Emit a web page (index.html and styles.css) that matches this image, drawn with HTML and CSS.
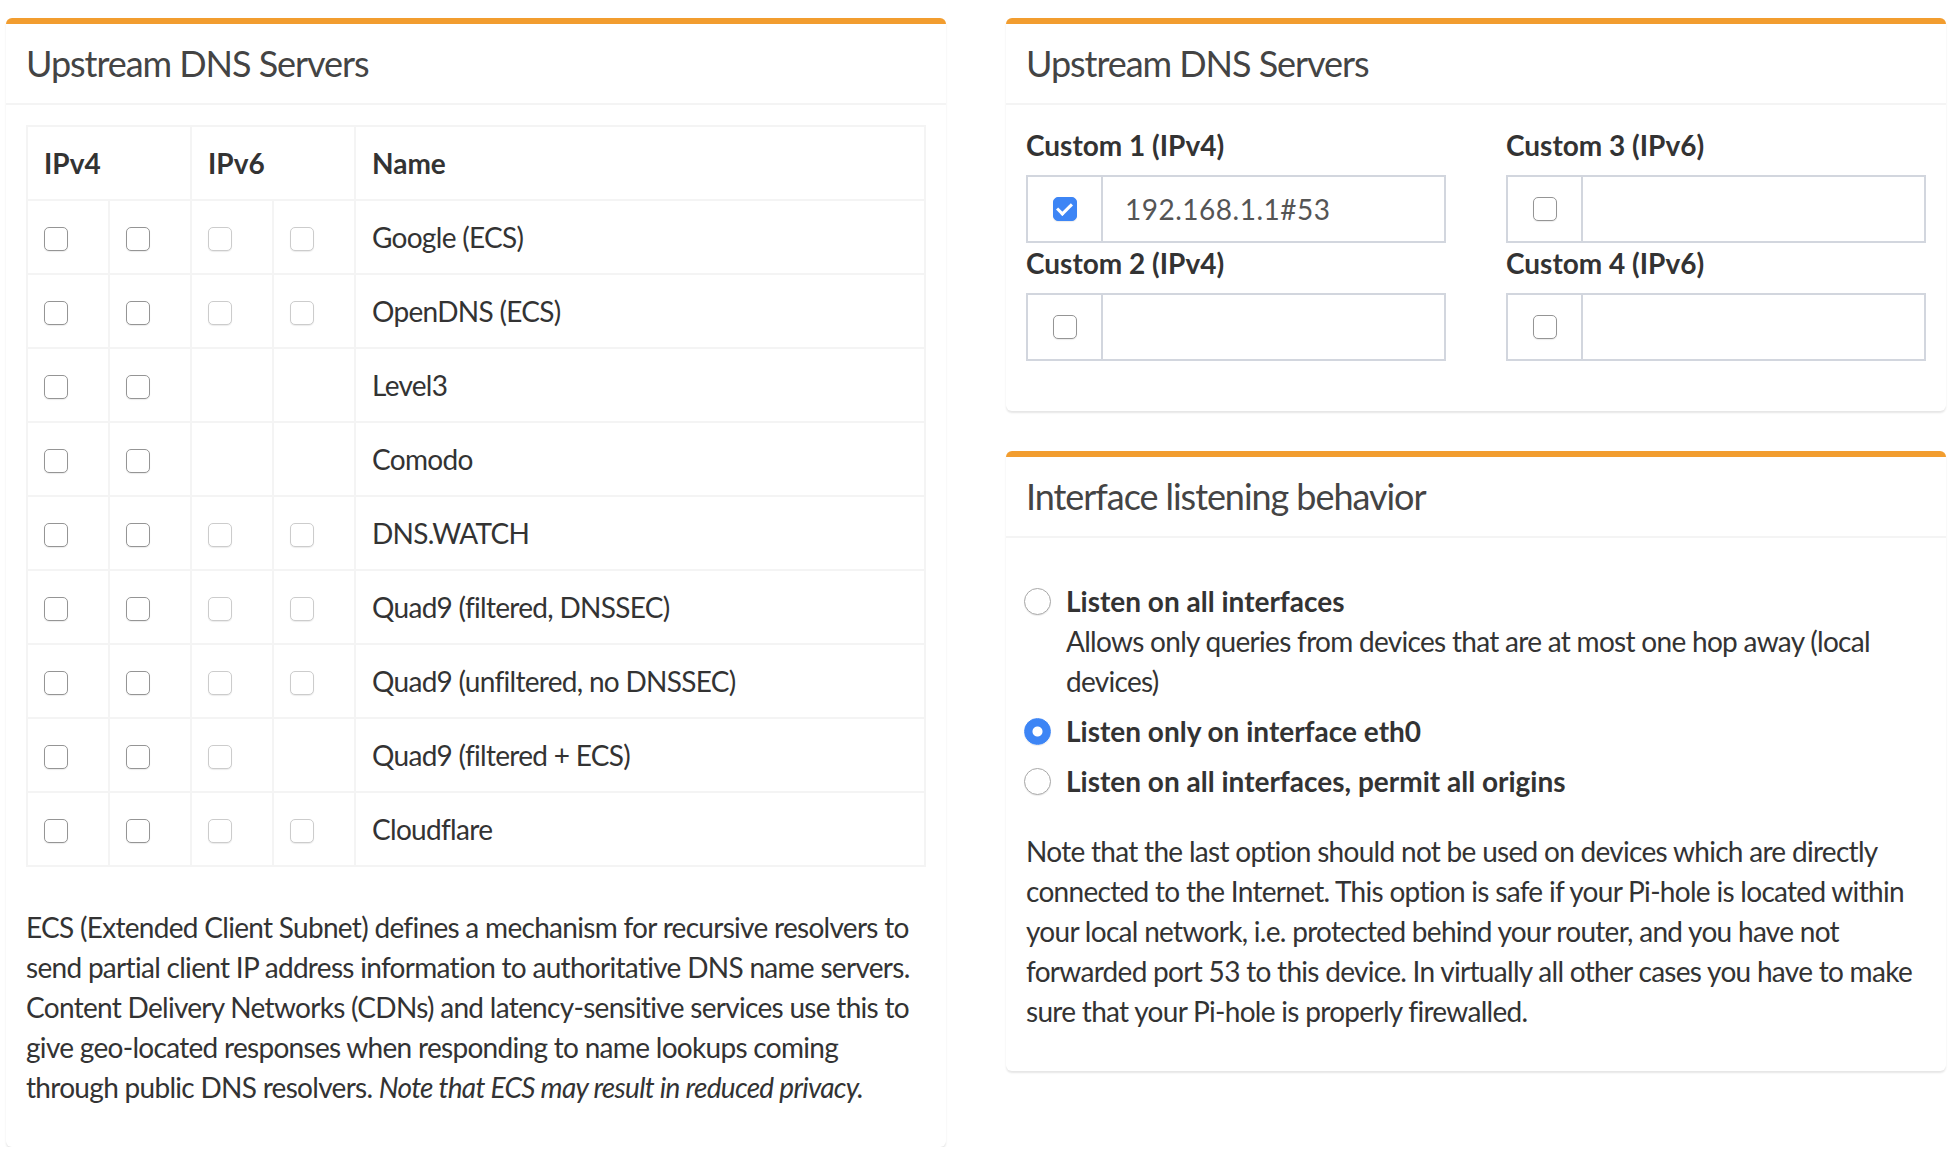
FILE: index.html
```html
<!DOCTYPE html>
<html lang="en">
<head>
    <meta charset="UTF-8">
    <meta name="viewport" content="width=device-width, initial-scale=1.0">
    <title>DNS Settings</title>
    <link rel="stylesheet" href="styles.css">
</head>
<body>
    <div class="page">
        <div class="column">
            <div class="box">
                <div class="box-header"><h3 class="box-title">Upstream DNS Servers</h3></div>
                <div class="box-body">
                    <table class="dns-table">
                        <colgroup>
                            <col class="cb-col"><col class="cb-col"><col class="cb-col"><col class="cb-col"><col>
                        </colgroup>
                        <thead>
                            <tr>
                                <th colspan="2">IPv4</th>
                                <th colspan="2">IPv6</th>
                                <th>Name</th>
                            </tr>
                        </thead>
                        <tbody>
                            <tr>
                                <td><input type="checkbox" class="cb"></td>
                                <td><input type="checkbox" class="cb"></td>
                                <td><input type="checkbox" class="cb light"></td>
                                <td><input type="checkbox" class="cb light"></td>
                                <td>Google (ECS)</td>
                            </tr>
                            <tr>
                                <td><input type="checkbox" class="cb"></td>
                                <td><input type="checkbox" class="cb"></td>
                                <td><input type="checkbox" class="cb light"></td>
                                <td><input type="checkbox" class="cb light"></td>
                                <td>OpenDNS (ECS)</td>
                            </tr>
                            <tr>
                                <td><input type="checkbox" class="cb"></td>
                                <td><input type="checkbox" class="cb"></td>
                                <td></td>
                                <td></td>
                                <td>Level3</td>
                            </tr>
                            <tr>
                                <td><input type="checkbox" class="cb"></td>
                                <td><input type="checkbox" class="cb"></td>
                                <td></td>
                                <td></td>
                                <td>Comodo</td>
                            </tr>
                            <tr>
                                <td><input type="checkbox" class="cb"></td>
                                <td><input type="checkbox" class="cb"></td>
                                <td><input type="checkbox" class="cb light"></td>
                                <td><input type="checkbox" class="cb light"></td>
                                <td>DNS.WATCH</td>
                            </tr>
                            <tr>
                                <td><input type="checkbox" class="cb"></td>
                                <td><input type="checkbox" class="cb"></td>
                                <td><input type="checkbox" class="cb light"></td>
                                <td><input type="checkbox" class="cb light"></td>
                                <td>Quad9 (filtered, DNSSEC)</td>
                            </tr>
                            <tr>
                                <td><input type="checkbox" class="cb"></td>
                                <td><input type="checkbox" class="cb"></td>
                                <td><input type="checkbox" class="cb light"></td>
                                <td><input type="checkbox" class="cb light"></td>
                                <td>Quad9 (unfiltered, no DNSSEC)</td>
                            </tr>
                            <tr>
                                <td><input type="checkbox" class="cb"></td>
                                <td><input type="checkbox" class="cb"></td>
                                <td><input type="checkbox" class="cb light"></td>
                                <td></td>
                                <td>Quad9 (filtered + ECS)</td>
                            </tr>
                            <tr>
                                <td><input type="checkbox" class="cb"></td>
                                <td><input type="checkbox" class="cb"></td>
                                <td><input type="checkbox" class="cb light"></td>
                                <td><input type="checkbox" class="cb light"></td>
                                <td>Cloudflare</td>
                            </tr>
                        </tbody>
                    </table>
                    <p class="hard-wrap">ECS (Extended Client Subnet) defines a mechanism for recursive resolvers to<br>
                    send partial client IP address information to authoritative DNS name servers.<br>
                    Content Delivery Networks (CDNs) and latency-sensitive services use this to<br>
                    give geo-located responses when responding to name lookups coming<br>
                    through public DNS resolvers. <em>Note that ECS may result in reduced privacy.</em></p>
                </div>
            </div>
        </div>

        <div class="column">
            <div class="box">
                <div class="box-header"><h3 class="box-title">Upstream DNS Servers</h3></div>
                <div class="box-body">
                    <div class="custom-grid">
                        <div class="custom-col">
                            <label for="custom1">Custom 1 (IPv4)</label>
                            <div class="input-group">
                                <span class="addon"><input type="checkbox" class="cb" checked></span>
                                <input type="text" id="custom1" class="field" value="192.168.1.1#53">
                            </div>
                            <label for="custom2">Custom 2 (IPv4)</label>
                            <div class="input-group">
                                <span class="addon"><input type="checkbox" class="cb"></span>
                                <input type="text" id="custom2" class="field">
                            </div>
                        </div>
                        <div class="custom-col">
                            <label for="custom3">Custom 3 (IPv6)</label>
                            <div class="input-group">
                                <span class="addon"><input type="checkbox" class="cb"></span>
                                <input type="text" id="custom3" class="field">
                            </div>
                            <label for="custom4">Custom 4 (IPv6)</label>
                            <div class="input-group">
                                <span class="addon"><input type="checkbox" class="cb"></span>
                                <input type="text" id="custom4" class="field">
                            </div>
                        </div>
                    </div>
                </div>
            </div>

            <div class="box">
                <div class="box-header"><h3 class="box-title">Interface listening behavior</h3></div>
                <div class="box-body">
                    <div class="radio-list">
                        <div class="radio">
                            <input type="radio" name="listening" id="local">
                            <label for="local"><strong>Listen on all interfaces</strong><br>Allows only queries from devices that are at most one hop away (local<br>devices)</label>
                        </div>
                        <div class="radio">
                            <input type="radio" name="listening" id="single" checked>
                            <label for="single"><strong>Listen only on interface eth0</strong></label>
                        </div>
                        <div class="radio">
                            <input type="radio" name="listening" id="all">
                            <label for="all"><strong>Listen on all interfaces, permit all origins</strong></label>
                        </div>
                    </div>
                    <p class="hard-wrap">Note that the last option should not be used on devices which are directly<br>
                    connected to the Internet. This option is safe if your Pi-hole is located within<br>
                    your local network, i.e. protected behind your router, and you have not<br>
                    forwarded port 53 to this device. In virtually all other cases you have to make<br>
                    sure that your Pi-hole is properly firewalled.</p>
                </div>
            </div>
        </div>
    </div>
</body>
</html>
```

FILE: styles.css
```css
body { margin: 0; background-color: #fff; font-family: Lato, "Liberation Sans", sans-serif; font-size: 28px; line-height: 40px; color: #333; letter-spacing: -0.7px; }
strong, th, label { letter-spacing: 0; }
.page { display: grid; grid-template-columns: 940px 940px; gap: 60px; padding: 18px 8px 0 6px; align-items: start; }
.column { display: flex; flex-direction: column; gap: 40px; }

.box { background-color: #fff; border-top: 6px solid #f29d2f; border-radius: 6px; box-shadow: 0 2px 2px rgba(0, 0, 0, 0.1); }
.box-header { padding: 20px; border-bottom: 2px solid #f4f4f4; }
.box-title { margin: 0; font-size: 36px; font-weight: normal; line-height: 39px; color: #444; letter-spacing: -1.05px; }
.box-body { padding: 20px; }
.box-body p { margin: 0 0 20px; }
.hard-wrap { white-space: nowrap; }
.radio label { letter-spacing: -0.7px; }

.dns-table { width: 100%; border-collapse: collapse; border: 2px solid #f4f4f4; margin-bottom: 40px; }
.dns-table th, .dns-table td { border: 2px solid #f4f4f4; padding: 16px; text-align: left; vertical-align: top; }
.dns-table th { font-weight: bold; }
.cb-col { width: 82px; }

.cb { appearance: none; -webkit-appearance: none; display: inline-grid; place-content: center; width: 24px; height: 24px; margin: 10px 0 0; border: 1.5px solid #959595; border-radius: 5px; background-color: #fff; box-shadow: 0 1px 1px rgba(0, 0, 0, 0.08); vertical-align: top; }
.cb.light { border-color: #cccccc; }
.cb:checked { background-color: #3d85f5; border-color: #3d85f5; }
.cb:checked::before { content: ""; width: 6px; height: 12px; margin-top: -3px; border: solid #fff; border-width: 0 3px 3px 0; transform: rotate(45deg); }

.custom-grid { display: grid; grid-template-columns: minmax(0, 1fr) minmax(0, 1fr); gap: 60px; margin-bottom: 30px; }
.custom-col label { display: block; font-weight: bold; margin-bottom: 10px; }
.input-group { display: flex; height: 68px; box-sizing: border-box; border: 2px solid #d2d6de; }
.addon { width: 73px; flex: none; display: flex; align-items: center; justify-content: center; border-right: 2px solid #d2d6de; }
.addon .cb { margin: 0; }
.field { flex: 1; width: 0; min-width: 0; border: none; outline: none; padding: 0 22px; font: inherit; color: #555; background: #fff; letter-spacing: 0.5px; }

.radio-list { display: flex; flex-direction: column; gap: 10px; padding-top: 23px; margin-bottom: 30px; }
.radio { display: flex; align-items: flex-start; gap: 15px; }
.radio input { appearance: none; -webkit-appearance: none; flex: none; width: 27px; height: 27px; margin: 7px 0 0 -2px; border: 1.5px solid #a8a8a8; border-radius: 50%; background-color: #fff; box-shadow: 0 1px 1px rgba(0, 0, 0, 0.08); }
.radio input:checked { border-color: #3d85f5; background: radial-gradient(circle, #fff 0 4.5px, #3d85f5 5.5px); }
.radio strong { letter-spacing: 0; }
```
